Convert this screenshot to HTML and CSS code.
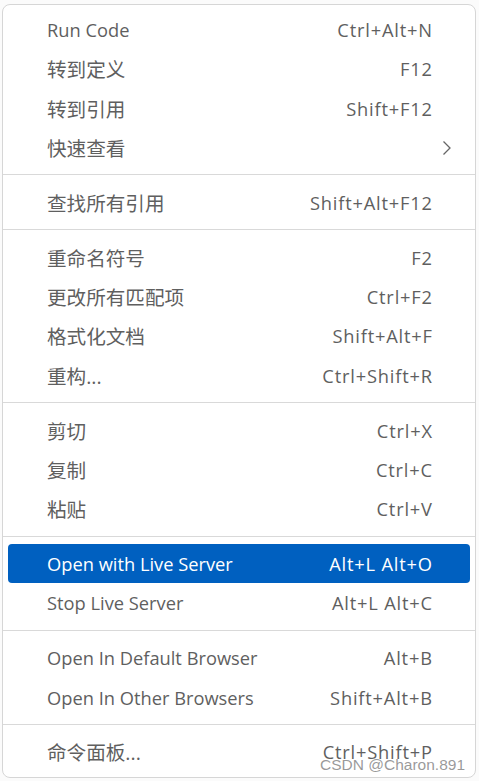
FILE: index.html
```html
<!DOCTYPE html>
<html lang="zh-CN">
<head>
<meta charset="utf-8">
<title>Context Menu</title>
<link rel="stylesheet" href="styles.css">
</head>
<body>
<div class="menu">
  <div class="item"><span class="label">Run Code</span><span class="key">Ctrl+Alt+N</span></div>
  <div class="item"><span class="label zh">转到定义</span><span class="key">F12</span></div>
  <div class="item"><span class="label zh">转到引用</span><span class="key">Shift+F12</span></div>
  <div class="item"><span class="label zh">快速查看</span><span class="key sub"><svg width="10" height="16" viewBox="0 0 10 16"><path d="M1.5 1.5 L8 8 L1.5 14.5" fill="none" stroke="#666" stroke-width="1.3"/></svg></span></div>
  <div class="sep"></div>
  <div class="item"><span class="label zh">查找所有引用</span><span class="key">Shift+Alt+F12</span></div>
  <div class="sep"></div>
  <div class="item"><span class="label zh">重命名符号</span><span class="key">F2</span></div>
  <div class="item"><span class="label zh">更改所有匹配项</span><span class="key">Ctrl+F2</span></div>
  <div class="item"><span class="label zh">格式化文档</span><span class="key">Shift+Alt+F</span></div>
  <div class="item"><span class="label zh">重构...</span><span class="key">Ctrl+Shift+R</span></div>
  <div class="sep"></div>
  <div class="item"><span class="label zh">剪切</span><span class="key">Ctrl+X</span></div>
  <div class="item"><span class="label zh">复制</span><span class="key">Ctrl+C</span></div>
  <div class="item"><span class="label zh">粘贴</span><span class="key">Ctrl+V</span></div>
  <div class="sep"></div>
  <div class="item active"><span class="label">Open with Live Server</span><span class="key">Alt+L Alt+O</span></div>
  <div class="item"><span class="label">Stop Live Server</span><span class="key">Alt+L Alt+C</span></div>
  <div class="sep"></div>
  <div class="item"><span class="label">Open In Default Browser</span><span class="key">Alt+B</span></div>
  <div class="item"><span class="label">Open In Other Browsers</span><span class="key">Shift+Alt+B</span></div>
  <div class="sep"></div>
  <div class="item"><span class="label zh">命令面板...</span><span class="key">Ctrl+Shift+P</span></div>
  <div class="watermark">CSDN @Charon.891</div>
</div>
</body>
</html>
```

FILE: styles.css
```css
html, body {
  margin: 0;
  padding: 0;
  background: #fbfbfb;
}
body {
  padding: 4px 3px 0 2px;
  font-family: "Open Sans", "Noto Sans CJK SC", sans-serif;
}
.menu {
  position: relative;
  box-sizing: border-box;
  width: 474px;
  height: 774px;
  background: #ffffff;
  border: 1px solid #d6d6d6;
  border-radius: 8px;
  padding: 5px 5px 4px 5px;
}
.item {
  display: flex;
  align-items: center;
  justify-content: space-between;
  height: 39.3px;
  padding: 0 38px 0 39px;
  border-radius: 4px;
  color: #5f5f5f;
  font-size: 18.3px;
  white-space: nowrap;
}
.label.zh {
  font-size: 19.6px;
}
.key {
  letter-spacing: 0.8px;
  margin-right: -0.8px;
}
.item.active {
  background: #0060c0;
  color: #ffffff;
}
.key.sub {
  display: flex;
  margin-right: -20px;
}
.sep {
  height: 1px;
  background: #d9d9d9;
  margin: 7.3px -5px;
}
.watermark {
  position: absolute;
  right: 10px;
  bottom: 3px;
  font-family: "Liberation Sans", Arial, sans-serif;
  font-size: 15.5px;
  color: rgba(120, 120, 120, 0.75);
}
```
